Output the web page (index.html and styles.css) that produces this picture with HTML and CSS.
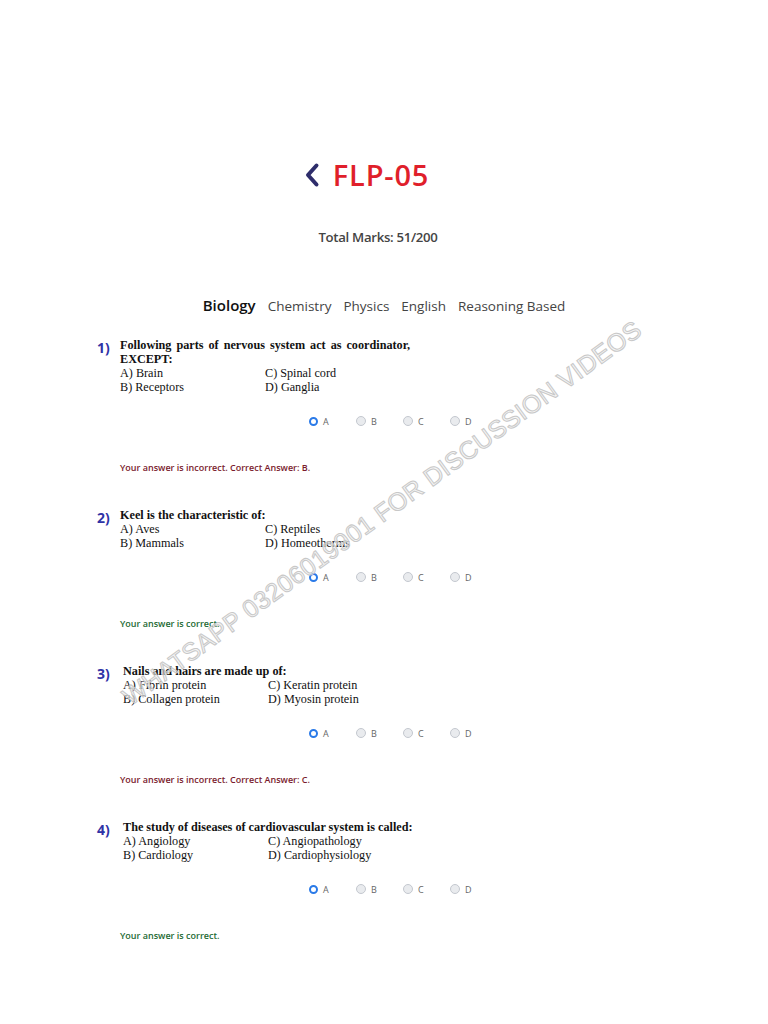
FILE: index.html
```html
<!DOCTYPE html>
<html>
<head>
<meta charset="utf-8">
<link rel="stylesheet" href="styles.css">
</head>
<body>
<div class="page">
  <header class="title">
    <svg class="back" width="18" height="26" viewBox="0 0 18 26"><path d="M13.5 3.5 L5 13 L13.5 22.5" fill="none" stroke="#2e2d6b" stroke-width="4" stroke-linecap="round" stroke-linejoin="round"/></svg>
    <h1>FLP-05</h1>
  </header>
  <p class="marks">Total Marks: 51/200</p>
  <nav class="tabs">
    <span class="tab active">Biology</span>
    <span class="tab">Chemistry</span>
    <span class="tab">Physics</span>
    <span class="tab">English</span>
    <span class="tab">Reasoning Based</span>
  </nav>

  <section class="questions">
    <div class="q">
      <div class="qhead">
        <span class="num">1)</span>
        <div class="qbody">
          <p class="qtext"><span class="just">Following parts of nervous system act as coordinator,</span>EXCEPT:</p>
          <div class="opts">
            <span>A) Brain</span><span>C) Spinal cord</span>
            <span>B) Receptors</span><span>D) Ganglia</span>
          </div>
        </div>
      </div>
      <div class="radios">
        <label class="r"><span class="dot on"></span>A</label>
        <label class="r"><span class="dot"></span>B</label>
        <label class="r"><span class="dot"></span>C</label>
        <label class="r"><span class="dot"></span>D</label>
      </div>
      <p class="res bad">Your answer is incorrect. Correct Answer: B.</p>
    </div>

    <div class="q">
      <div class="qhead">
        <span class="num">2)</span>
        <div class="qbody">
          <p class="qtext">Keel is the characteristic of:</p>
          <div class="opts">
            <span>A) Aves</span><span>C) Reptiles</span>
            <span>B) Mammals</span><span>D) Homeotherms</span>
          </div>
        </div>
      </div>
      <div class="radios">
        <label class="r"><span class="dot on"></span>A</label>
        <label class="r"><span class="dot"></span>B</label>
        <label class="r"><span class="dot"></span>C</label>
        <label class="r"><span class="dot"></span>D</label>
      </div>
      <p class="res good">Your answer is correct.</p>
    </div>

    <div class="q">
      <div class="qhead">
        <span class="num">3)</span>
        <div class="qbody shift">
          <p class="qtext">Nails and hairs are made up of:</p>
          <div class="opts">
            <span>A) Fibrin protein</span><span>C) Keratin protein</span>
            <span>B) Collagen protein</span><span>D) Myosin protein</span>
          </div>
        </div>
      </div>
      <div class="radios">
        <label class="r"><span class="dot on"></span>A</label>
        <label class="r"><span class="dot"></span>B</label>
        <label class="r"><span class="dot"></span>C</label>
        <label class="r"><span class="dot"></span>D</label>
      </div>
      <p class="res bad">Your answer is incorrect. Correct Answer: C.</p>
    </div>

    <div class="q">
      <div class="qhead">
        <span class="num">4)</span>
        <div class="qbody shift">
          <p class="qtext">The study of diseases of cardiovascular system is called:</p>
          <div class="opts">
            <span>A) Angiology</span><span>C) Angiopathology</span>
            <span>B) Cardiology</span><span>D) Cardiophysiology</span>
          </div>
        </div>
      </div>
      <div class="radios">
        <label class="r"><span class="dot on"></span>A</label>
        <label class="r"><span class="dot"></span>B</label>
        <label class="r"><span class="dot"></span>C</label>
        <label class="r"><span class="dot"></span>D</label>
      </div>
      <p class="res good">Your answer is correct.</p>
    </div>
  </section>

  <div class="watermark">WHATSAPP 03206019901 FOR DISCUSSION VIDEOS</div>
</div>
</body>
</html>
```

FILE: styles.css
```css
html, body {
  margin: 0;
  padding: 0;
  background: #ffffff;
}
.page {
  position: relative;
  width: 768px;
  height: 1024px;
  overflow: hidden;
  font-family: "Open Sans", "Liberation Sans", sans-serif;
}
.title {
  display: flex;
  align-items: center;
  justify-content: center;
  gap: 12px;
  height: 40px;
  margin: 155px 0 0 0;
  padding-right: 36px;
}
.back {
  display: block;
}
.title h1 {
  margin: 0;
  font-size: 29px;
  line-height: 40px;
  font-weight: 600;
  color: #e01f2b;
  letter-spacing: 0.8px;
}
.marks {
  margin: 32px 0 0 0;
  text-align: center;
  line-height: 20px;
  font-size: 13.2px;
  font-weight: 600;
  color: #444444;
  letter-spacing: -0.3px;
  padding-right: 12px;
}
.tabs {
  display: flex;
  justify-content: center;
  align-items: baseline;
  gap: 12px;
  margin-top: 48px;
  line-height: 20px;
  font-size: 13.5px;
  font-weight: 500;
  color: #444444;
}
.tab.active {
  color: #111111;
  font-size: 15px;
  font-weight: 600;
}
.questions {
  margin-top: 22px;
  padding-left: 97px;
  display: flex;
  flex-direction: column;
  gap: 33px;
}
.qhead {
  display: flex;
}
.num {
  width: 23px;
  flex: none;
  font-family: "Open Sans", "Liberation Sans", sans-serif;
  font-weight: 700;
  font-size: 14px;
  line-height: 14px;
  padding-top: 3px;
  color: #2f33a6;
}
.qbody {
  font-family: "Liberation Serif", "Times New Roman", serif;
  color: #111111;
}
.qbody.shift {
  padding-left: 3px;
}
.qtext {
  margin: 0;
  font-weight: 700;
  font-size: 12.2px;
  line-height: 14px;
}
.just {
  display: block;
  width: 290px;
  white-space: nowrap;
  text-align: justify;
  text-align-last: justify;
}
.opts {
  display: grid;
  grid-template-columns: 145px auto;
  font-size: 12.2px;
  line-height: 14px;
}
.radios {
  display: grid;
  grid-template-columns: repeat(4, 47px);
  margin: 20px 0 0 212px;
  height: 14px;
  align-items: center;
}
.r {
  display: flex;
  align-items: center;
  gap: 5px;
  font-size: 9px;
  color: #666666;
  font-weight: 500;
}
.dot {
  width: 8px;
  height: 8px;
  border-radius: 50%;
  border: 1px solid #c4c8cf;
  background: #e9ebee;
  box-sizing: content-box;
}
.dot.on {
  width: 5px;
  height: 5px;
  border: 2.5px solid #2a7ae8;
  background: #ffffff;
}
.res {
  margin: 33px 0 0 23px;
  line-height: 14px;
  font-size: 9px;
  font-weight: 600;
}
.res.bad {
  color: #7a1b2d;
}
.res.good {
  color: #1d6a33;
}
.watermark {
  position: absolute;
  left: 382px;
  top: 513px;
  transform: translate(-50%, -50%) rotate(-36deg);
  white-space: nowrap;
  font-family: "Liberation Sans", Arial, sans-serif;
  font-size: 25px;
  color: rgba(235, 235, 235, 0.5);
  -webkit-text-stroke: 1px #c8c8c8;
  pointer-events: none;
  letter-spacing: 0.3px;
}
```
